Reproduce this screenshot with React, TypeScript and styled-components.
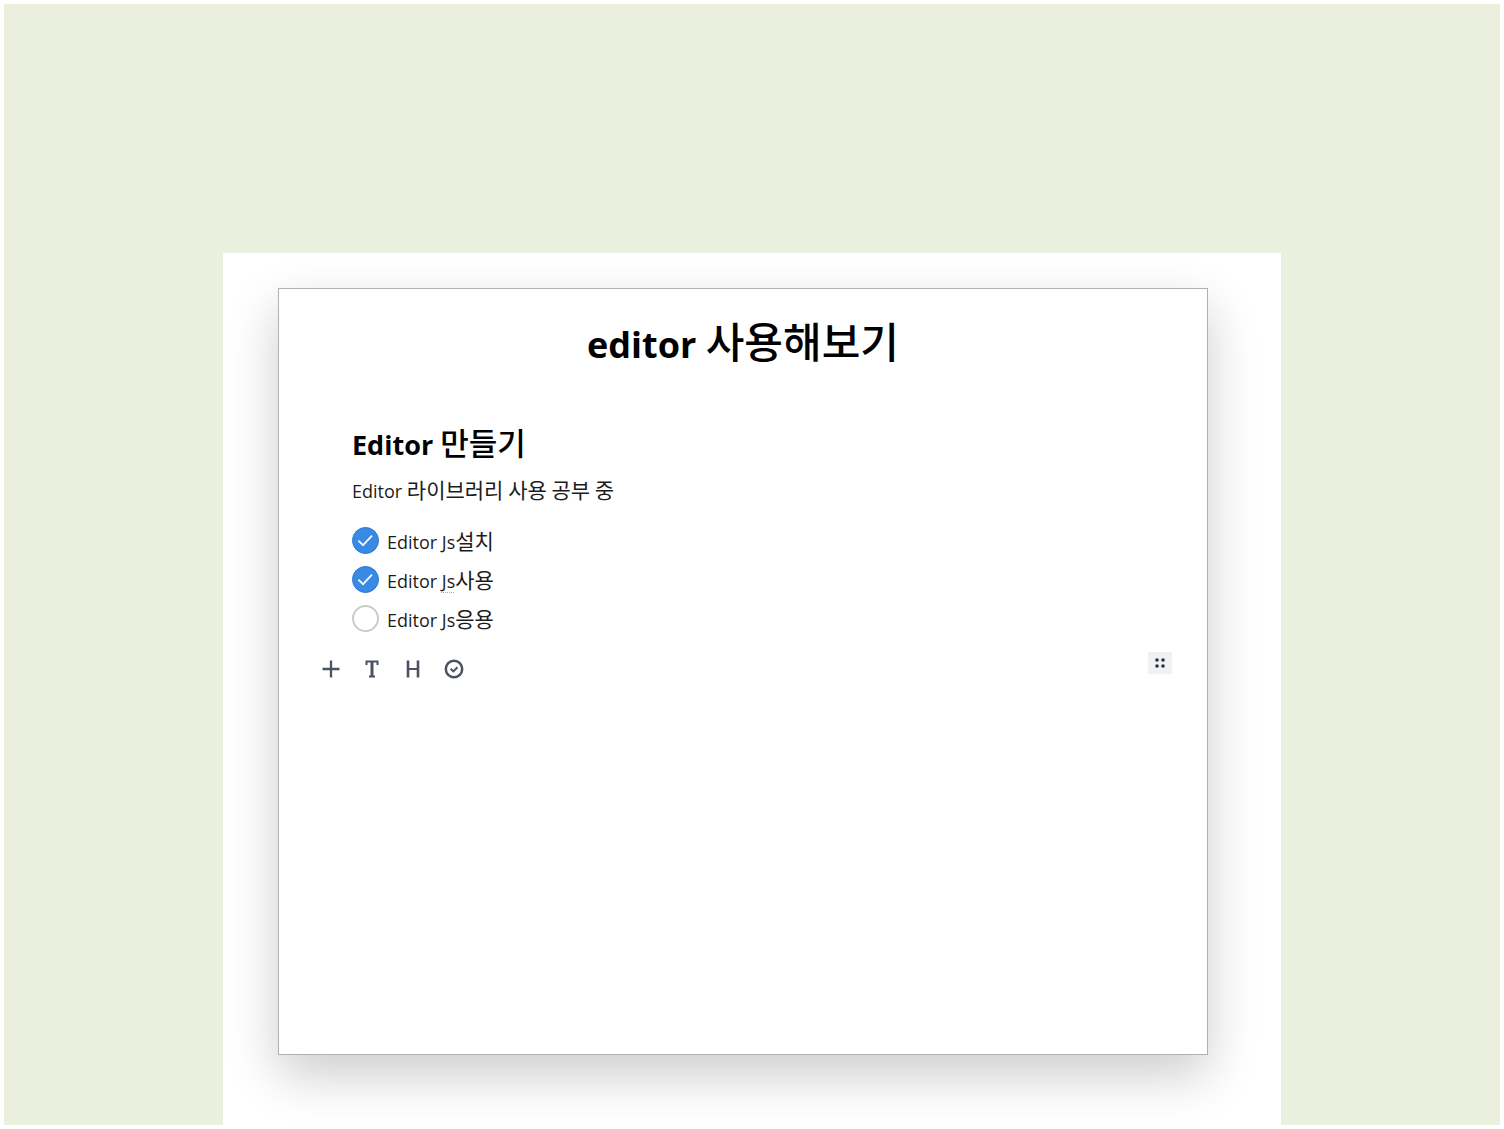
import React, { useState } from "react";
import styled, { createGlobalStyle } from "styled-components";

const GlobalStyle = createGlobalStyle`
  *, *::before, *::after { box-sizing: border-box; }
  body {
    margin: 0;
    background: #ffffff;
    color: #1c1c1c;
    font-family: "Open Sans", "Noto Sans CJK KR", sans-serif;
  }
`;

const Page = styled.div`
  display: flex;
  flex-direction: column;
  align-items: center;
  min-height: 100vh;
  padding-top: 249px;
  border: 4px solid #ffffff;
  background: #ebefde;
`;

const Sheet = styled.main`
  display: flex;
  flex: 1;
  width: 100%;
  max-width: 1058px;
  padding: 35px 73px 70px 55px;
  background: #ffffff;
`;

const Card = styled.article`
  flex: 1;
  padding: 24px 35px;
  border: 1px solid #b0b0b0;
  background: #ffffff;
  box-shadow: 0 20px 48px rgba(0, 0, 0, 0.2);
`;

const Title = styled.h1`
  margin: 0;
  color: #000000;
  font-size: 36px;
  font-weight: 700;
  line-height: 64px;
  text-align: center;
`;

const Body = styled.section`
  padding: 44px 38px 0;
`;

const Heading = styled.h2`
  margin: 0;
  color: #000000;
  font-size: 27px;
  font-weight: 700;
  line-height: 48px;
`;

const Paragraph = styled.p`
  margin: 0;
  font-size: 18px;
  line-height: 44px;
`;

const Hangul = styled.span<{ $size: number; $weight?: number }>`
  font-family: "Noto Sans CJK KR", sans-serif;
  font-size: ${(p) => p.$size}px;
  font-weight: ${(p) => p.$weight ?? 400};
  line-height: 1;
`;

const Checklist = styled.ul`
  margin: 8px 0 0;
  padding: 0;
  list-style: none;
`;

const ChecklistItem = styled.li`
  height: 39px;
`;

const ItemLabel = styled.label`
  display: inline-flex;
  align-items: center;
  gap: 8px;
  height: 39px;
  font-size: 18px;
  line-height: 36px;
  cursor: pointer;
`;

const ItemText = styled.span`
  padding-top: 3px;
`;

const CheckBox = styled.span`
  display: grid;
  width: 27px;
  height: 27px;

  > * {
    grid-area: 1 / 1;
  }

  svg {
    pointer-events: none;
  }
`;

const CheckInput = styled.input`
  width: 27px;
  height: 27px;
  margin: 0;
  border: 2px solid #cbcbcb;
  border-radius: 50%;
  background: #ffffff;
  appearance: none;
  cursor: pointer;

  &:checked {
    border: 1px solid #2476d3;
    background: #388ae5;
  }
`;

const Misspelt = styled.span<{ $marked: boolean }>`
  text-decoration: ${(p) => (p.$marked ? "underline dotted 1px #e88a8a" : "none")};
  text-underline-offset: 4px;
`;

const Toolbar = styled.div`
  display: flex;
  align-items: center;
  justify-content: space-between;
  margin-top: 2px;
`;

const Tools = styled.div`
  display: flex;
  gap: 7px;
  padding-top: 12px;
`;

const ToolButton = styled.button`
  display: grid;
  place-items: center;
  width: 34px;
  height: 34px;
  padding: 0;
  border: 0;
  background: transparent;
  color: #4b5263;
  cursor: pointer;
`;

const SettingsButton = styled(ToolButton)`
  width: 24px;
  height: 22px;
  background: #eff2f5;
  color: #2c2f3f;
`;

type Item = { name: string; done: boolean; marked: boolean };

const initialItems: Item[] = [
  { name: "설치", done: true, marked: false },
  { name: "사용", done: true, marked: true },
  { name: "응용", done: false, marked: false },
];

function Icon({ children }: { children: React.ReactNode }) {
  return (
    <svg width="20" height="20" viewBox="0 0 20 20" fill="none" stroke="currentColor" strokeWidth="2" aria-hidden="true">
      {children}
    </svg>
  );
}

export default function App() {
  const [items, setItems] = useState(initialItems);

  const toggle = (index: number) =>
    setItems(items.map((item, i) => (i === index ? { ...item, done: !item.done } : item)));

  return (
    <>
      <GlobalStyle />
      <Page>
        <Sheet>
          <Card>
            <Title>
              editor <Hangul $size={42} $weight={500}>사용해보기</Hangul>
            </Title>
            <Body>
              <Heading>
                Editor <Hangul $size={31} $weight={500}>만들기</Hangul>
              </Heading>
              <Paragraph>
                Editor <Hangul $size={21}>라이브러리 사용 공부 중</Hangul>
              </Paragraph>
              <Checklist>
                {items.map((item, index) => (
                  <ChecklistItem key={item.name}>
                    <ItemLabel>
                      <CheckBox>
                        <CheckInput type="checkbox" checked={item.done} onChange={() => toggle(index)} />
                        {item.done && (
                          <svg width="27" height="27" viewBox="0 0 27 27" fill="none" stroke="#ffffff" strokeWidth="1.7" aria-hidden="true">
                            <path d="M6.4 13.6l4.6 4.6 9-9.6" />
                          </svg>
                        )}
                      </CheckBox>
                      <ItemText>
                        Editor <Misspelt $marked={item.marked}>Js</Misspelt>
                        <Hangul $size={21}>{item.name}</Hangul>
                      </ItemText>
                    </ItemLabel>
                  </ChecklistItem>
                ))}
              </Checklist>
            </Body>
            <Toolbar>
              <Tools>
                <ToolButton type="button" aria-label="Add">
                  <Icon>
                    <path d="M10 1.5v17M1.5 10h17" strokeWidth="2.3" />
                  </Icon>
                </ToolButton>
                <ToolButton type="button" aria-label="Text">
                  <Icon>
                    <path d="M4.5 6V2.5h11V6M7 17.5h6" />
                    <path d="M10 2.5v15" strokeWidth="3" />
                  </Icon>
                </ToolButton>
                <ToolButton type="button" aria-label="Heading">
                  <Icon>
                    <path d="M5 1.5v17M15 1.5v17" strokeWidth="2.6" />
                    <path d="M5 10h10" />
                  </Icon>
                </ToolButton>
                <ToolButton type="button" aria-label="Checklist">
                  <Icon>
                    <circle cx="10" cy="10" r="8.2" strokeWidth="2.5" />
                    <path d="M6.6 9.8l2.7 2.6 4.2-4.2" />
                  </Icon>
                </ToolButton>
              </Tools>
              <SettingsButton type="button" aria-label="Settings">
                <svg width="12" height="12" viewBox="0 0 12 12" fill="currentColor" aria-hidden="true">
                  <circle cx="3" cy="3" r="1.8" />
                  <circle cx="9" cy="3" r="1.8" />
                  <circle cx="3" cy="9" r="1.8" />
                  <circle cx="9" cy="9" r="1.8" />
                </svg>
              </SettingsButton>
            </Toolbar>
          </Card>
        </Sheet>
      </Page>
    </>
  );
}
